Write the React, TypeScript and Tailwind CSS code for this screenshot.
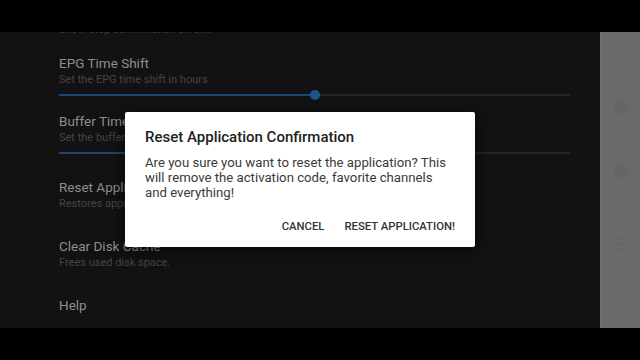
import React from "react";

const font = { fontFamily: "Roboto, 'Noto Sans', Arial, sans-serif" };

function Slider({ fill, thumb }: { fill: number; thumb: boolean }) {
  return (
    <div className="relative h-[14px] w-[511px] flex items-center">
      <div className="h-[2px] w-full bg-[#242424] flex">
        <div className="h-full bg-[#1b4774]" style={{ width: fill }} />
      </div>
      {thumb && (
        <div
          className="absolute top-[2px] h-[10px] w-[10px] rounded-full bg-[#1c5591]"
          style={{ left: fill - 5 }}
        />
      )}
    </div>
  );
}

function Item({
  title,
  sub,
  mt,
}: {
  title: string;
  sub?: string;
  mt: string;
}) {
  return (
    <div className={mt}>
      <div className="text-[13.5px] leading-[18px] text-[#8e8e8e]">{title}</div>
      {sub && <div className="text-[11px] leading-[16px] text-[#454545]">{sub}</div>}
    </div>
  );
}

export default function App() {
  return (
    <div className="w-[640px] h-[360px] bg-black flex flex-col relative overflow-hidden" style={font}>
      <div className="h-[32px] shrink-0" />
      <div className="h-[296px] shrink-0 flex">
        <div className="flex-1 bg-[#121212] pl-[59px] flex flex-col">
          <div className="h-[6px] overflow-hidden">
            <div className="-mt-[10px] text-[11px] leading-[16px] text-[#3a3a3a]">
              Show stop confirmation on exit
            </div>
          </div>
          <Item mt="mt-[16px]" title="EPG Time Shift" sub="Set the EPG time shift in hours" />
          <Slider fill={256} thumb />
          <Item mt="mt-[10px]" title="Buffer Time" sub="Set the buffer time in seconds" />
          <Slider fill={180} thumb={false} />
          <Item mt="mt-[18px]" title="Reset Application" sub="Restores application to default settings." />
          <Item mt="mt-[25px]" title="Clear Disk Cache" sub="Frees used disk space." />
          <Item mt="mt-[25px]" title="Help" />
        </div>
        <div className="w-[40px] bg-[#6a6a6a] border-l border-[#707070] flex flex-col items-center pt-[68px] gap-[50px]">
          <div className="h-[14px] w-[14px] rounded-full bg-[#666666]" />
          <div className="h-[14px] w-[14px] rounded-full bg-[#666666]" />
          <div className="flex flex-col gap-[3px] mt-[10px]">
            <div className="h-[2px] w-[12px] bg-[#666666]" />
            <div className="h-[2px] w-[12px] bg-[#666666]" />
            <div className="h-[2px] w-[12px] bg-[#666666]" />
          </div>
        </div>
      </div>
      <div className="flex-1" />

      <div className="absolute left-[125px] top-[112px] w-[350px] h-[135px] bg-white rounded-[2px] shadow-[0_4px_16px_rgba(0,0,0,0.6)] px-[20px] flex flex-col">
        <div className="mt-[15px] text-[15px] leading-[20px] font-medium text-[#212121]">
          Reset Application Confirmation
        </div>
        <div className="mt-[8px] text-[13.2px] leading-[15px] text-[#3a3a3a]">
          Are you sure you want to reset the application? This will remove the activation code, favorite channels and everything!
        </div>
        <div className="mt-auto mb-[12px] flex justify-end gap-[20px] text-[11.3px] leading-[16px] font-medium text-[#333333]">
          <span>CANCEL</span>
          <span>RESET APPLICATION!</span>
        </div>
      </div>
    </div>
  );
}
